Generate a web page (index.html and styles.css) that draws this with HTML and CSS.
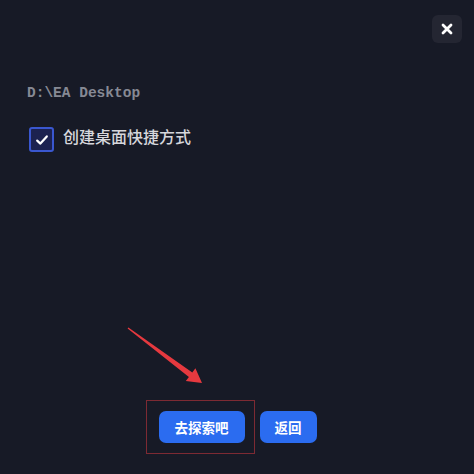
FILE: index.html
```html
<!DOCTYPE html>
<html lang="zh-CN">
<head>
<meta charset="utf-8">
<title>安装</title>
<link rel="stylesheet" href="styles.css">
</head>
<body>
<div class="dialog">
  <div class="header">
    <button class="close" aria-label="关闭">
      <svg width="14" height="14" viewBox="0 0 14 14"><path d="M3 3 L11 11 M11 3 L3 11" stroke="#ffffff" stroke-width="2.8" stroke-linecap="round"/></svg>
    </button>
  </div>
  <div class="path">D:\EA Desktop</div>
  <label class="option">
    <span class="checkbox">
      <svg width="16" height="16" viewBox="0 0 16 16"><path d="M3.2 8.6 L6.4 11.6 L12.8 4.4" fill="none" stroke="#ffffff" stroke-width="2.2" stroke-linecap="round" stroke-linejoin="round"/></svg>
    </span>
    <span class="option-text">创建桌面快捷方式</span>
  </label>
  <div class="actions">
    <button class="btn btn-marked">去探索吧</button>
    <button class="btn">返回</button>
  </div>
  <svg class="pointer" width="474" height="474" viewBox="0 0 474 474">
    <polygon points="128.4,327.5 192.3,372.4 195.4,368.2 202,383 185.8,381 188.9,376.9 127.6,328.5" fill="#e6393f"/>
  </svg>
</div>
</body>
</html>
```

FILE: styles.css
```css
html, body {
  margin: 0;
  padding: 0;
  background: #171a26;
}

.dialog {
  position: relative;
  box-sizing: border-box;
  width: 474px;
  height: 474px;
  padding: 15px 12px 31px 27px;
  display: flex;
  flex-direction: column;
  font-family: "Noto Sans CJK SC", "Noto Sans", sans-serif;
  overflow: hidden;
}

.header {
  display: flex;
  justify-content: flex-end;
}

.close {
  width: 30px;
  height: 28px;
  border: none;
  border-radius: 6px;
  background: #242632;
  display: flex;
  align-items: center;
  justify-content: center;
  padding: 0;
}

.path {
  margin-top: 41px;
  font-family: "Liberation Mono", "DejaVu Sans Mono", monospace;
  font-weight: bold;
  font-size: 14.5px;
  line-height: 18px;
  color: #868994;
}

.option {
  margin-top: 25px;
  margin-left: 2px;
  display: flex;
  align-items: center;
  gap: 9px;
}

.checkbox {
  box-sizing: border-box;
  width: 25px;
  height: 25px;
  border: 2px solid #3a57cf;
  border-radius: 3px;
  background: #1c2250;
  display: flex;
  align-items: center;
  justify-content: center;
}

.option-text {
  font-size: 16px;
  font-weight: 500;
  color: #d6d7dc;
  line-height: 20px;
  margin-top: -7px;
}

.actions {
  margin: auto -12px 0 -27px;
  display: flex;
  justify-content: center;
  gap: 15px;
  padding-left: 1px;
}

.btn {
  position: relative;
  height: 32px;
  padding: 0 16px;
  border: none;
  border-radius: 7px;
  background: #2b6cf0;
  color: #ffffff;
  font-family: "Noto Sans CJK SC", sans-serif;
  font-weight: bold;
  font-size: 13.5px;
}

.btn + .btn {
  padding: 0 15px;
}

/* red frame drawn around the primary action */
.btn-marked::after {
  content: "";
  position: absolute;
  top: -11px;
  bottom: -11px;
  left: -13px;
  right: -10px;
  border: 1.5px solid #7d2a33;
}

.pointer {
  position: absolute;
  left: 0;
  top: 0;
  pointer-events: none;
}
```
